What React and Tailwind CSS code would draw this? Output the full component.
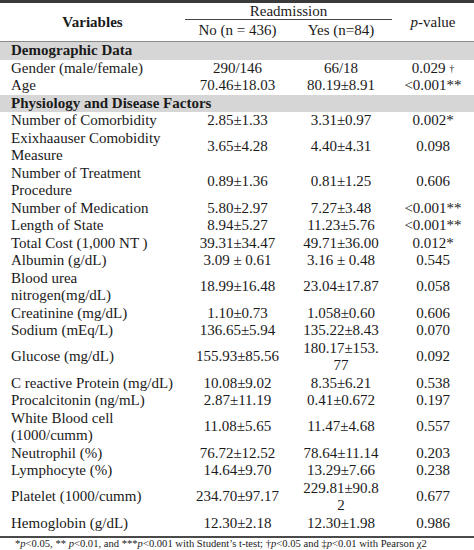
import React from "react";

const rows = [
  { band: "Demographic Data" },
  { label: ["Gender (male/female)"], no: ["290/146"], yes: ["66/18"], p: <>0.029 <sup className="text-[10px] relative top-[-1px]">†</sup></> },
  { label: ["Age"], no: ["70.46±18.03"], yes: ["80.19±8.91"], p: "<0.001**" },
  { band: "Physiology and Disease Factors" },
  { label: ["Number of Comorbidity"], no: ["2.85±1.33"], yes: ["3.31±0.97"], p: "0.002*" },
  { label: ["Exixhaauser Comobidity", "Measure"], no: ["3.65±4.28"], yes: ["4.40±4.31"], p: "0.098" },
  { label: ["Number of Treatment", "Procedure"], no: ["0.89±1.36"], yes: ["0.81±1.25"], p: "0.606" },
  { label: ["Number of Medication"], no: ["5.80±2.97"], yes: ["7.27±3.48"], p: "<0.001**" },
  { label: ["Length of State"], no: ["8.94±5.27"], yes: ["11.23±5.76"], p: "<0.001**" },
  { label: ["Total Cost (1,000 NT )"], no: ["39.31±34.47"], yes: ["49.71±36.00"], p: "0.012*" },
  { label: ["Albumin (g/dL)"], no: ["3.09 ± 0.61"], yes: ["3.16 ± 0.48"], p: "0.545" },
  { label: ["Blood urea", "nitrogen(mg/dL)"], no: ["18.99±16.48"], yes: ["23.04±17.87"], p: "0.058" },
  { label: ["Creatinine (mg/dL)"], no: ["1.10±0.73"], yes: ["1.058±0.60"], p: "0.606" },
  { label: ["Sodium (mEq/L)"], no: ["136.65±5.94"], yes: ["135.22±8.43"], p: "0.070" },
  { label: ["Glucose (mg/dL)"], no: ["155.93±85.56"], yes: ["180.17±153.", "77"], p: "0.092" },
  { label: ["C reactive Protein (mg/dL)"], no: ["10.08±9.02"], yes: ["8.35±6.21"], p: "0.538" },
  { label: ["Procalcitonin (ng/mL)"], no: ["2.87±11.19"], yes: ["0.41±0.672"], p: "0.197" },
  { label: ["White Blood cell", "(1000/cumm)"], no: ["11.08±5.65"], yes: ["11.47±4.68"], p: "0.557" },
  { label: ["Neutrophil (%)"], no: ["76.72±12.52"], yes: ["78.64±11.14"], p: "0.203" },
  { label: ["Lymphocyte (%)"], no: ["14.64±9.70"], yes: ["13.29±7.66"], p: "0.238" },
  { label: ["Platelet (1000/cumm)"], no: ["234.70±97.17"], yes: ["229.81±90.8", "2"], p: "0.677" },
  { label: ["Hemoglobin (g/dL)"], no: ["12.30±2.18"], yes: ["12.30±1.98"], p: "0.986" },
];

const Lines = ({ lines }) => (
  <>
    {lines.map((l, i) => (
      <div key={i}>{l}</div>
    ))}
  </>
);

export default function App() {
  return (
    <div
      className="w-[474px] h-[550px] bg-white text-[#1a1a1a] overflow-hidden"
      style={{ fontFamily: '"Liberation Serif", "Times New Roman", serif' }}
    >
      <div className="border-t-[3px] border-[#3a3a3a]">
        {/* header */}
        <div className="grid grid-cols-[185px_105px_102px_82px] border-b border-[#8a8a8a] text-[15px] leading-[17px]">
          <div className="row-span-2 flex items-center justify-center font-bold h-[38px] pt-[1px]">Variables</div>
          <div className="col-span-2 h-[17px] border-b border-[#444] flex items-center justify-center">Readmission</div>
          <div className="row-span-2 flex items-center justify-center h-[38px] pt-[1px]">
            <span><i>p</i>-value</span>
          </div>
          <div className="h-[21px] flex items-center justify-center">No (n = 436)</div>
          <div className="h-[21px] flex items-center justify-center">Yes (n=84)</div>
        </div>
        {/* body */}
        <div className="text-[15px] leading-[17.5px] pb-[4px] border-b-2 border-[#4a4a4a]">
          {rows.map((r, i) =>
            r.band ? (
              <div key={i} className="bg-[#d6d6d6] font-bold pl-[11px] h-[17.5px]">
                {r.band}
              </div>
            ) : (
              <div key={i} className="grid grid-cols-[185px_105px_102px_82px] items-center">
                <div className="pl-[11px] whitespace-nowrap">
                  <Lines lines={r.label} />
                </div>
                <div className="text-center whitespace-nowrap">
                  <Lines lines={r.no} />
                </div>
                <div className="text-center whitespace-nowrap">
                  <Lines lines={r.yes} />
                </div>
                <div className="text-center whitespace-nowrap">{r.p}</div>
              </div>
            )
          )}
        </div>
        <div className="text-[10.6px] leading-[10px] pl-[15px] pt-[1px] whitespace-nowrap">
          *<i>p</i>&lt;0.05, ** <i>p</i>&lt;0.01, and ***<i>p</i>&lt;0.001 with Student’s t-test; †<i>p</i>&lt;0.05 and ‡<i>p</i>&lt;0.01 with Pearson χ2
        </div>
      </div>
    </div>
  );
}
